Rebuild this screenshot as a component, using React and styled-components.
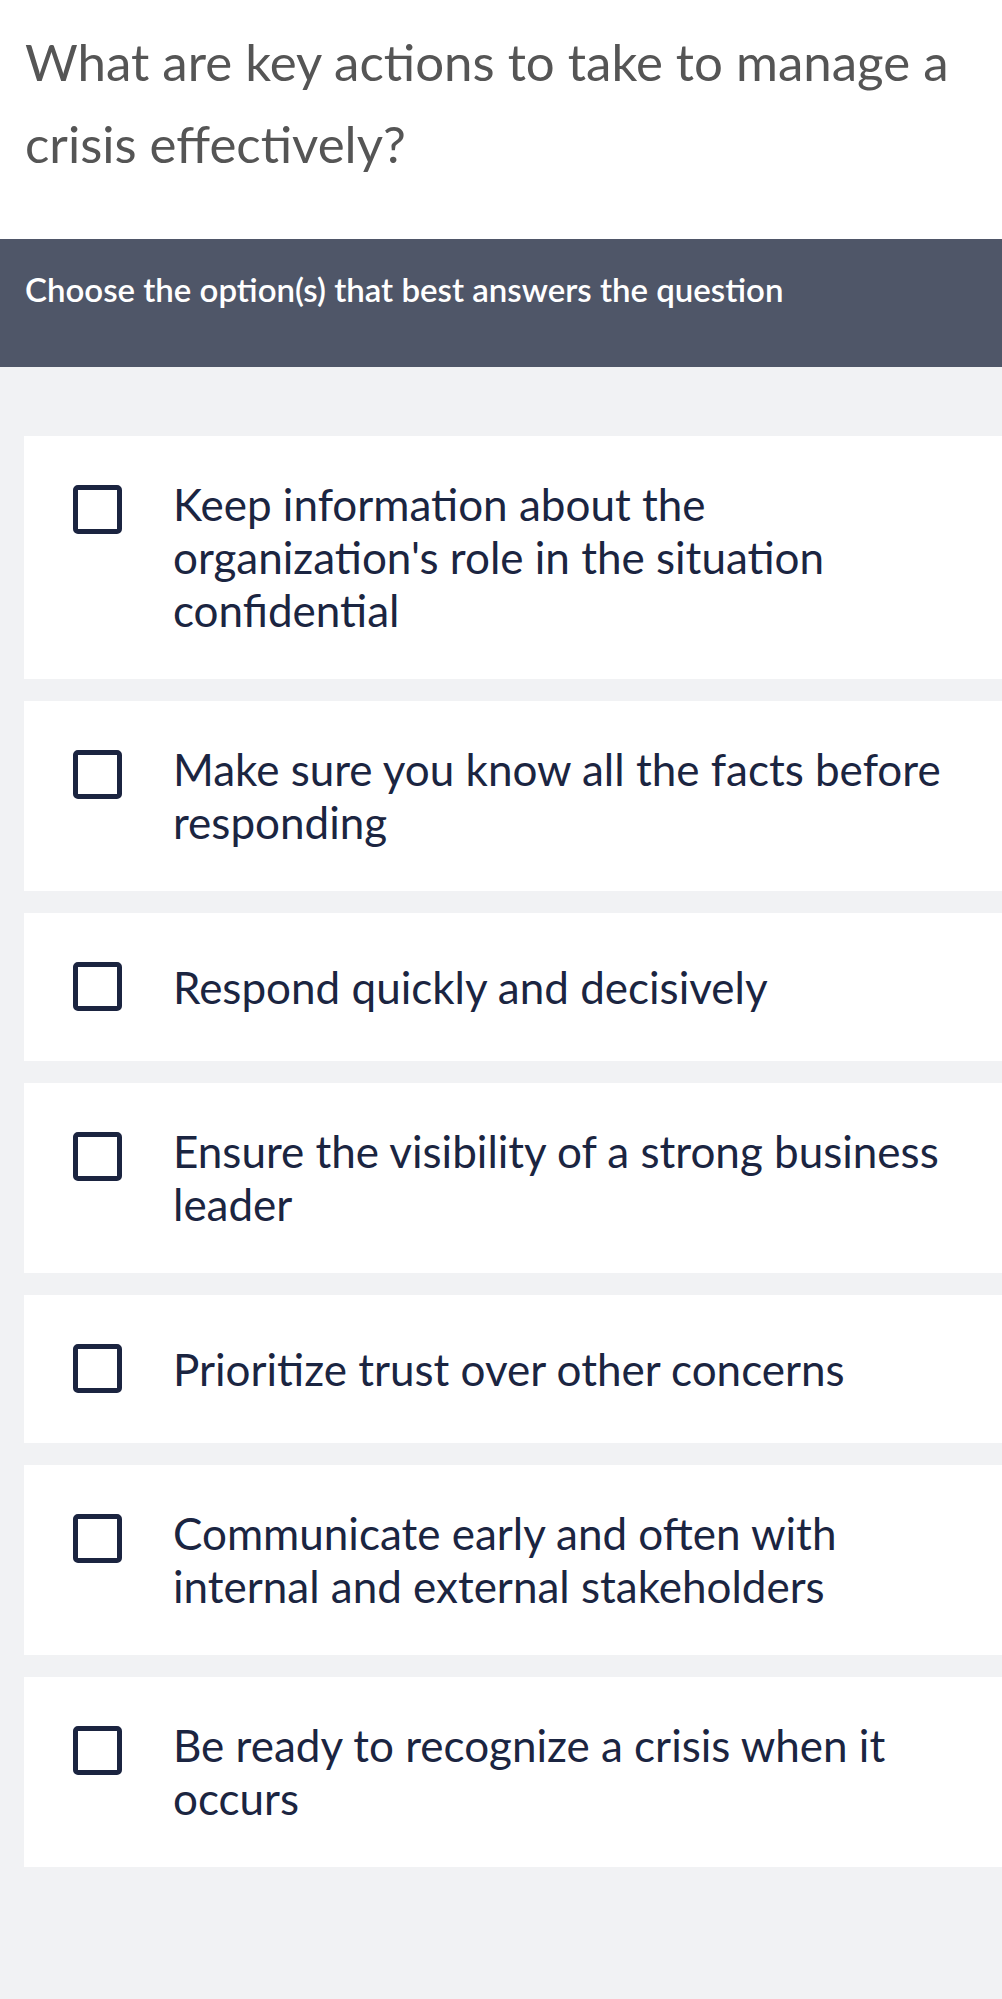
import React from "react";
import styled, { createGlobalStyle } from "styled-components";

const options = [
  "Keep information about the organization's role in the situation confidential",
  "Make sure you know all the facts before responding",
  "Respond quickly and decisively",
  "Ensure the visibility of a strong business leader",
  "Prioritize trust over other concerns",
  "Communicate early and often with internal and external stakeholders",
  "Be ready to recognize a crisis when it occurs",
];

const App = () => {
  return (
    <>
      <GlobalStyle />
      <Page>
        <QuestionHeader>
          <Question>What are key actions to take to manage a crisis effectively?</Question>
        </QuestionHeader>
        <Instruction>Choose the option(s) that best answers the question</Instruction>
        <OptionList>
          {options.map((text) => (
            <OptionCard key={text}>
              <Checkbox />
              <OptionLabel>{text}</OptionLabel>
            </OptionCard>
          ))}
        </OptionList>
      </Page>
    </>
  );
};

const GlobalStyle = createGlobalStyle`
  html, body {
    margin: 0;
    padding: 0;
    background: #f1f2f4;
    font-family: Lato, "Open Sans", sans-serif;
  }
`;

const Page = styled.div`
  min-height: 1999px;
  background: #f1f2f4;
  overflow: hidden;
`;

const QuestionHeader = styled.header`
  background: #fff;
  padding: 21px 25px 54px;
`;

const Question = styled.h1`
  margin: 0;
  font-family: Lato, sans-serif;
  font-size: 51px;
  font-weight: 400;
  line-height: 82px;
  color: #555555;
  max-width: 960px;
`;

const Instruction = styled.div`
  background: #4f5668;
  color: #fff;
  font-family: Lato, sans-serif;
  font-size: 33px;
  font-weight: 600;
  line-height: 40px;
  padding: 30px 25px 58px;
`;

const OptionList = styled.div`
  display: flex;
  flex-direction: column;
  gap: 22px;
  padding: 69px 0 40px 24px;
`;

const OptionCard = styled.label`
  display: flex;
  align-items: flex-start;
  background: #fff;
  padding: 42px 50px 42px 49px;
`;

const Checkbox = styled.span`
  flex: none;
  box-sizing: border-box;
  width: 49px;
  height: 49px;
  margin: 7px 51px 8px 0;
  border: 5px solid #1b2440;
  border-radius: 5px;
`;

const OptionLabel = styled.span`
  display: flex;
  align-items: center;
  min-height: 64px;
  font-family: Lato, sans-serif;
  font-size: 44px;
  line-height: 53px;
  color: #1b2541;
`;

export default App;
